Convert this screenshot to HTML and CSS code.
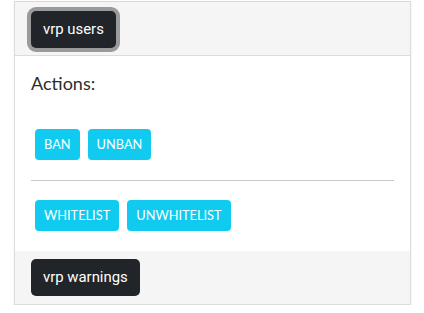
FILE: index.html
```html
<!DOCTYPE html>
<html>
<head>
<meta charset="utf-8">
<link rel="stylesheet" href="styles.css">
</head>
<body>
<div class="card">
  <div class="card-header">
    <button class="btn btn-dark focused">vrp users</button>
  </div>
  <div class="card-body">
    <div class="title">Actions:</div>
    <div class="row">
      <button class="btn-info">BAN</button>
      <button class="btn-info">UNBAN</button>
    </div>
    <hr class="sep">
    <div class="row">
      <button class="btn-info">WHITELIST</button>
      <button class="btn-info">UNWHITELIST</button>
    </div>
  </div>
  <div class="card-footer">
    <button class="btn btn-dark">vrp warnings</button>
  </div>
</div>
</body>
</html>
```
FILE: styles.css
```css
* { box-sizing: border-box; }
body {
  margin: 0;
  padding: 1px 13px 0 14px;
  background: #fff;
  font-family: Lato, "Noto Sans", sans-serif;
  color: #333;
}
.card {
  border: 1px solid #dcdcdc;
  border-top-color: #d8d8d8;
  box-shadow: 0 1px 2px rgba(0,0,0,0.08);
  display: flex;
  flex-direction: column;
}
.card-header {
  background: #f5f5f5;
  border-bottom: 1px solid #dcdcdc;
  padding: 8px 16px 7px;
  height: 54px;
}
.btn {
  font-family: Roboto, "Noto Sans", sans-serif;
  font-size: 14.9px;
  color: #fff;
  background: #212529;
  border: none;
  border-radius: 5px;
  height: 37px;
  padding: 0 12px;
  line-height: 37px;
}
.btn.focused {
  box-shadow: 0 0 0 4px #9a9a9a;
  margin-top: 1px;
}
.card-body {
  padding: 16px 16px 20px;
  height: 195px;
}
.title {
  font-size: 18px;
  color: #2d2d2d;
  line-height: 22px;
  font-weight: 400;
}
.row {
  display: flex;
  gap: 8px;
  padding-left: 4px;
}
.title + .row { margin-top: 35px; }
.btn-info {
  font-family: Lato, "Noto Sans", sans-serif;
  font-size: 12.8px;
  color: #fff;
  background: #10cbef;
  border: none;
  border-radius: 4px;
  height: 31px;
  padding: 0 9px;
  line-height: 31px;
}
.sep {
  border: none;
  border-top: 1px solid #c8c8c8;
  margin: 20px 0 19px;
  height: 0;
}
.card-footer {
  background: #f5f5f5;
  padding: 8px 16px;
  height: 53px;
}
```
